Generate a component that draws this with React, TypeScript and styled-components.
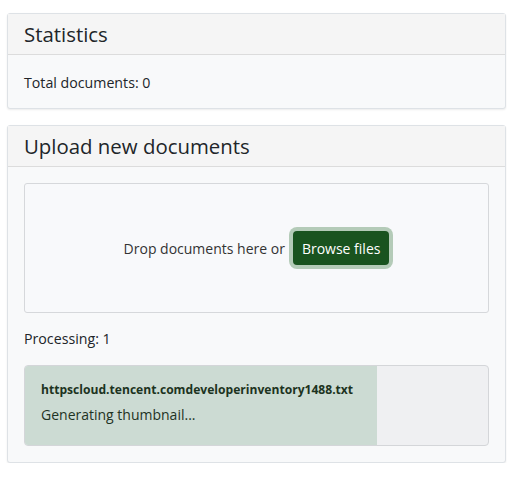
import React from "react";
import styled, { createGlobalStyle } from "styled-components";

const Global = createGlobalStyle`
  * { box-sizing: border-box; }
  body {
    margin: 0;
    background: #ffffff;
    font-family: "Open Sans", "Noto Sans", sans-serif;
    color: #212529;
  }
`;

const Page = styled.div`
  padding: 13px 1px 0 7px;
  display: flex;
  flex-direction: column;
  gap: 16px;
`;

const Card = styled.section`
  background: #f8f9fa;
  border: 1px solid #dee2e6;
  border-radius: 3px;
  box-shadow: 0 1px 2px rgba(0, 0, 0, 0.08);
`;

const CardHeader = styled.header`
  background: #f5f5f5;
  border-bottom: 1px solid #dcdcdc;
  height: 41px;
  padding: 0 16px;
  display: flex;
  align-items: center;
  font-size: 20.4px;
  color: #212529;
`;

const CardBody = styled.div<{ $pb?: number }>`
  padding: 16px 16px ${(p) => p.$pb ?? 16}px 16px;
  font-size: 14px;
  display: flex;
  flex-direction: column;
`;

const Text = styled.div`
  height: 22px;
  display: flex;
  align-items: center;
  font-size: 14.2px;
`;

const DropZone = styled.div`
  height: 130px;
  border: 1px solid #d6d8db;
  border-radius: 3px;
  background: #f8f9fb;
  display: flex;
  align-items: center;
  justify-content: center;
  gap: 8px;
  font-size: 14px;
  color: #333;
  margin-bottom: 14px;
`;

const BrowseButton = styled.button`
  font-family: inherit;
  font-size: 14px;
  color: #ffffff;
  background: #19531f;
  border: none;
  border-radius: 4px;
  height: 34px;
  padding: 0 9px;
  box-shadow: 0 0 0 4px #b4cbb8;
  cursor: pointer;
`;

const Item = styled.div`
  margin-top: 16px;
  height: 81px;
  border: 1px solid #d4d6d9;
  border-radius: 4px;
  background: #eff0f2;
  position: relative;
  overflow: hidden;
`;

const Fill = styled.div`
  position: absolute;
  left: 0;
  top: 0;
  bottom: 0;
  background: #ccdbd3;
`;

const ItemContent = styled.div`
  position: relative;
  padding: 13px 16px;
  display: flex;
  flex-direction: column;
  gap: 4px;
`;

const FileName = styled.div`
  font-size: 12.1px;
  font-weight: 700;
  color: #1c3321;
  height: 20px;
  display: flex;
  align-items: center;
`;

const Status = styled.div`
  font-size: 14px;
  color: #1f3324;
  height: 22px;
  display: flex;
  align-items: center;
`;

export default function App() {
  const progress = 76;
  return (
    <>
      <Global />
      <Page>
        <Card>
          <CardHeader>Statistics</CardHeader>
          <CardBody $pb={15}>
            <Text>Total documents: 0</Text>
          </CardBody>
        </Card>
        <Card>
          <CardHeader>Upload new documents</CardHeader>
          <CardBody>
            <DropZone>
              Drop documents here or <BrowseButton>Browse files</BrowseButton>
            </DropZone>
            <Text>Processing: 1</Text>
            <Item>
              <Fill style={{ width: `${progress}%` }} />
              <ItemContent>
                <FileName>httpscloud.tencent.comdeveloperinventory1488.txt</FileName>
                <Status>Generating thumbnail...</Status>
              </ItemContent>
            </Item>
          </CardBody>
        </Card>
      </Page>
    </>
  );
}
